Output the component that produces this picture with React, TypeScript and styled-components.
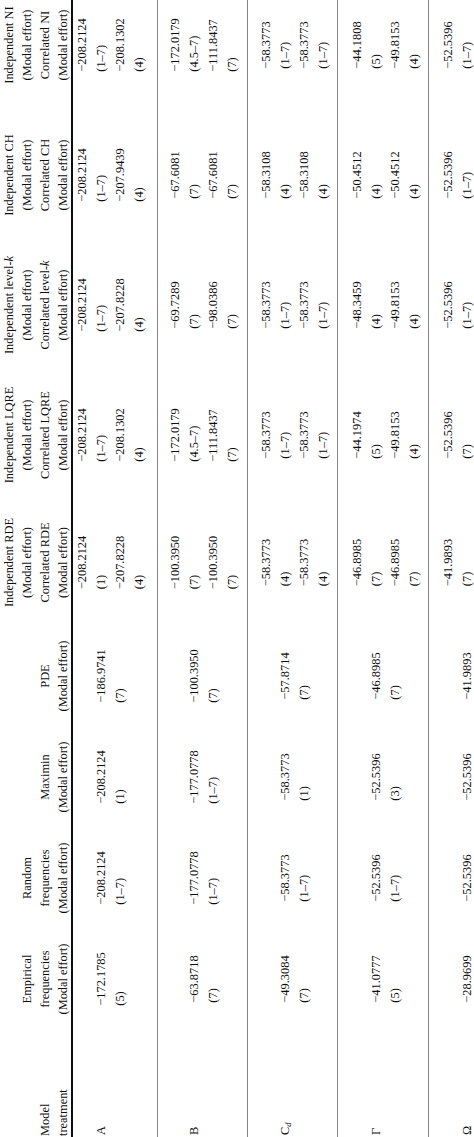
import React from "react";
import styled, { createGlobalStyle } from "styled-components";

const GlobalStyle = createGlobalStyle`
  html, body {
    margin: 0;
    padding: 0;
    background: #ffffff;
    overflow: hidden;
  }
`;

// widths of the table columns (table is drawn landscape, then turned)
const COLS = "108px 100px 102px 100px 102px 125px 130px 130px 130px 130px";
const LINE = 19;

const Page = styled.div`
  width: 474px;
  height: 1137px;
  overflow: hidden;
  background: #fff;
`;

const Sheet = styled.div`
  width: 1200px;
  height: 474px;
  transform-origin: 0 0;
  transform: translateY(1137px) rotate(-90deg);
  font-family: "Liberation Serif", "Times New Roman", serif;
  font-size: 12.4px;
  line-height: ${LINE}px;
  color: #0d0d0d;
`;

const HeadRow = styled.div`
  display: grid;
  grid-template-columns: ${COLS};
  align-items: end;
  height: 71px;
  line-height: 18px;
  border-bottom: 2px solid #0d0d0d;
`;

const HeadCell = styled.div<{ $left?: boolean }>`
  text-align: ${(p) => (p.$left ? "left" : "center")};
  padding-left: ${(p) => (p.$left ? "1px" : "0")};
  white-space: nowrap;
`;

const BodyRow = styled.div<{ $h: number; $top: number; $last?: boolean }>`
  display: grid;
  grid-template-columns: ${COLS};
  align-items: start;
  height: ${(p) => p.$h}px;
  padding-top: ${(p) => p.$top}px;
  box-sizing: border-box;
  border-bottom: ${(p) => (p.$last ? "none" : "1px solid #858585")};
`;

const Label = styled.div`
  padding-top: ${LINE}px;
  padding-left: 2px;
`;

const Cell = styled.div<{ $offset?: boolean }>`
  display: flex;
  justify-content: center;
  padding-top: ${(p) => (p.$offset ? LINE : 0)}px;
`;

const Block = styled.div`
  display: flex;
  flex-direction: column;
  white-space: nowrap;
`;

const Sub = styled.sub`
  font-size: 8.5px;
  font-style: italic;
  vertical-align: -2px;
  line-height: 0;
`;

const headers: string[][] = [
  ["Empirical", "frequencies", "(Modal effort)"],
  ["Random", "frequencies", "(Modal effort)"],
  ["Maximin", "(Modal effort)"],
  ["PDE", "(Modal effort)"],
  ["Independent RDE", "(Modal effort)", "Correlated RDE", "(Modal effort)"],
  ["Independent LQRE", "(Modal effort)", "Correlated LQRE", "(Modal effort)"],
  ["Independent level-k", "(Modal effort)", "Correlated level-k", "(Modal effort)"],
  ["Independent CH", "(Modal effort)", "Correlated CH", "(Modal effort)"],
  ["Independent NI", "(Modal effort)", "Correlated NI", "(Modal effort)"],
];

type Row = { label: React.ReactNode; h: number; top: number; cells: string[][] };

const rows: Row[] = [
  {
    label: "A",
    h: 85,
    top: 0,
    cells: [
      ["−172.1785", "(5)"],
      ["−208.2124", "(1–7)"],
      ["−208.2124", "(1)"],
      ["−186.9741", "(7)"],
      ["−208.2124", "(1)", "−207.8228", "(4)"],
      ["−208.2124", "(1–7)", "−208.1302", "(4)"],
      ["−208.2124", "(1–7)", "−207.8228", "(4)"],
      ["−208.2124", "(1–7)", "−207.9439", "(4)"],
      ["−208.2124", "(1–7)", "−208.1302", "(4)"],
    ],
  },
  {
    label: "B",
    h: 90,
    top: 8,
    cells: [
      ["−63.8718", "(7)"],
      ["−177.0778", "(1–7)"],
      ["−177.0778", "(1–7)"],
      ["−100.3950", "(7)"],
      ["−100.3950", "(7)", "−100.3950", "(7)"],
      ["−172.0179", "(4.5–7)", "−111.8437", "(7)"],
      ["−69.7289", "(7)", "−98.0386", "(7)"],
      ["−67.6081", "(7)", "−67.6081", "(7)"],
      ["−172.0179", "(4.5–7)", "−111.8437", "(7)"],
    ],
  },
  {
    label: (
      <>
        C<Sub>d</Sub>
      </>
    ),
    h: 90,
    top: 9,
    cells: [
      ["−49.3084", "(7)"],
      ["−58.3773", "(1–7)"],
      ["−58.3773", "(1)"],
      ["−57.8714", "(7)"],
      ["−58.3773", "(4)", "−58.3773", "(4)"],
      ["−58.3773", "(1–7)", "−58.3773", "(1–7)"],
      ["−58.3773", "(1–7)", "−58.3773", "(1–7)"],
      ["−58.3108", "(4)", "−58.3108", "(4)"],
      ["−58.3773", "(1–7)", "−58.3773", "(1–7)"],
    ],
  },
  {
    label: "Γ",
    h: 91,
    top: 10,
    cells: [
      ["−41.0777", "(5)"],
      ["−52.5396", "(1–7)"],
      ["−52.5396", "(3)"],
      ["−46.8985", "(7)"],
      ["−46.8985", "(7)", "−46.8985", "(7)"],
      ["−44.1974", "(5)", "−49.8153", "(4)"],
      ["−48.3459", "(4)", "−49.8153", "(4)"],
      ["−50.4512", "(4)", "−50.4512", "(4)"],
      ["−44.1808", "(5)", "−49.8153", "(4)"],
    ],
  },
  {
    label: "Ω",
    h: 90,
    top: 10,
    cells: [
      ["−28.9699", "(7)"],
      ["−52.5396", "(1–7)"],
      ["−52.5396", "(3)"],
      ["−41.9893", "(7)"],
      ["−41.9893", "(7)", "−41.9893", "(7)"],
      ["−52.5396", "(7)", "−52.5396", "(7)"],
      ["−52.5396", "(1–7)", "−52.5396", "(1–7)"],
      ["−52.5396", "(1–7)", "−52.5396", "(1–7)"],
      ["−52.5396", "(1–7)", "−52.5396", "(1–7)"],
    ],
  },
];

function headLine(text: string, i: number) {
  // level-k carries an italic k
  if (text.endsWith("level-k")) {
    return (
      <div key={i}>
        {text.slice(0, -1)}
        <i>k</i>
      </div>
    );
  }
  return <div key={i}>{text}</div>;
}

export default function App() {
  return (
    <Page>
      <GlobalStyle />
      <Sheet>
        <HeadRow>
          <HeadCell $left>
            <div>Model</div>
            <div>treatment</div>
          </HeadCell>
          {headers.map((h, i) => (
            <HeadCell key={i}>{h.map(headLine)}</HeadCell>
          ))}
        </HeadRow>
        {rows.map((r, ri) => (
          <BodyRow key={ri} $h={r.h} $top={r.top} $last={ri === rows.length - 1}>
            <Label>{r.label}</Label>
            {r.cells.map((c, ci) => (
              <Cell key={ci} $offset={c.length === 2}>
                <Block>
                  {c.map((t, ti) => (
                    <span key={ti}>{t}</span>
                  ))}
                </Block>
              </Cell>
            ))}
          </BodyRow>
        ))}
      </Sheet>
    </Page>
  );
}
